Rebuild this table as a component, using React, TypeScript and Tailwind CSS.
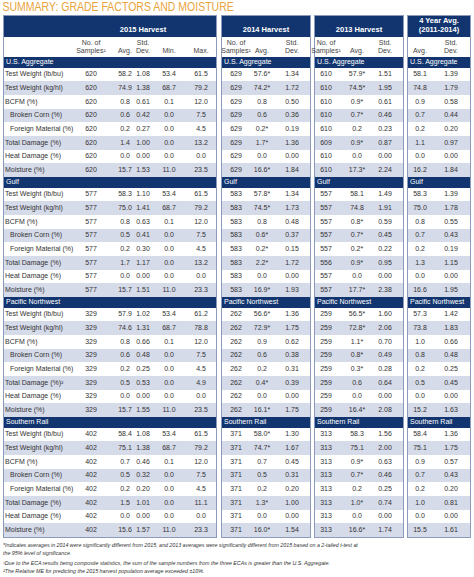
const LABELS: [string, boolean][] = [
  ["Test Weight (lb/bu)", false],
  ["Test Weight (kg/hl)", false],
  ["BCFM (%)", false],
  ["Broken Corn (%)", true],
  ["Foreign Material (%)", true],
  ["Total Damage (%)", false],
  ["Heat Damage (%)", false],
  ["Moisture (%)", false],
];

// each row: 2015 | 2014 | 2013 | 4 year avg
const SECTIONS = [
  {
    name: "U.S. Aggregate",
    rows: [
      "620 58.2 1.08 53.4 61.5|629 57.6* 1.34|610 57.9* 1.51|58.1 1.39",
      "620 74.9 1.38 68.7 79.2|629 74.2* 1.72|610 74.5* 1.95|74.8 1.79",
      "620 0.8 0.61 0.1 12.0|629 0.8 0.50|610 0.9* 0.61|0.9 0.58",
      "620 0.6 0.42 0.0 7.5|629 0.6 0.36|610 0.7* 0.46|0.7 0.44",
      "620 0.2 0.27 0.0 4.5|629 0.2* 0.19|610 0.2 0.23|0.2 0.20",
      "620 1.4 1.00 0.0 13.2|629 1.7* 1.36|609 0.9* 0.87|1.1 0.97",
      "620 0.0 0.00 0.0 0.0|629 0.0 0.00|610 0.0 0.00|0.0 0.00",
      "620 15.7 1.53 11.0 23.5|629 16.6* 1.84|610 17.3* 2.24|16.2 1.84",
    ],
  },
  {
    name: "Gulf",
    rows: [
      "577 58.3 1.10 53.4 61.5|583 57.8* 1.34|557 58.1 1.49|58.3 1.39",
      "577 75.0 1.41 68.7 79.2|583 74.5* 1.73|557 74.8 1.91|75.0 1.78",
      "577 0.8 0.63 0.1 12.0|583 0.8 0.48|557 0.8* 0.59|0.8 0.55",
      "577 0.5 0.41 0.0 7.5|583 0.6* 0.37|557 0.7* 0.45|0.7 0.43",
      "577 0.2 0.30 0.0 4.5|583 0.2* 0.15|557 0.2* 0.22|0.2 0.19",
      "577 1.7 1.17 0.0 13.2|583 2.2* 1.72|556 0.9* 0.95|1.3 1.15",
      "577 0.0 0.00 0.0 0.0|583 0.0 0.00|557 0.0 0.00|0.0 0.00",
      "577 15.7 1.51 11.0 23.3|583 16.9* 1.93|557 17.7* 2.38|16.6 1.95",
    ],
  },
  {
    name: "Pacific Northwest",
    td: "Total Damage (%)²",
    rows: [
      "329 57.9 1.02 53.4 61.2|262 56.6* 1.36|259 56.5* 1.60|57.3 1.42",
      "329 74.6 1.31 68.7 78.8|262 72.9* 1.75|259 72.8* 2.06|73.8 1.83",
      "329 0.8 0.66 0.1 12.0|262 0.9 0.62|259 1.1* 0.70|1.0 0.66",
      "329 0.6 0.48 0.0 7.5|262 0.6 0.38|259 0.8* 0.49|0.8 0.48",
      "329 0.2 0.25 0.0 4.5|262 0.2 0.31|259 0.3* 0.28|0.2 0.25",
      "329 0.5 0.53 0.0 4.9|262 0.4* 0.39|259 0.6 0.64|0.5 0.45",
      "329 0.0 0.00 0.0 0.0|262 0.0 0.00|259 0.0 0.00|0.0 0.00",
      "329 15.7 1.55 11.0 23.5|262 16.1* 1.75|259 16.4* 2.08|15.2 1.63",
    ],
  },
  {
    name: "Southern Rail",
    rows: [
      "402 58.4 1.08 53.4 61.5|371 58.0* 1.30|313 58.3 1.56|58.4 1.36",
      "402 75.1 1.38 68.7 79.2|371 74.7* 1.67|313 75.1 2.00|75.1 1.75",
      "402 0.7 0.46 0.1 12.0|371 0.7 0.45|313 0.9* 0.63|0.9 0.57",
      "402 0.5 0.32 0.0 7.5|371 0.5 0.31|313 0.7* 0.46|0.7 0.43",
      "402 0.2 0.20 0.0 4.5|371 0.2 0.20|313 0.2 0.25|0.2 0.20",
      "402 1.5 1.01 0.0 11.1|371 1.3* 1.00|313 1.0* 0.74|1.0 0.81",
      "402 0.0 0.00 0.0 0.0|371 0.0 0.00|313 0.0 0.00|0.0 0.00",
      "402 15.6 1.57 11.0 23.3|371 16.0* 1.54|313 16.6* 1.74|15.5 1.61",
    ],
  },
];

type PanelProps = {
  idx: number;
  width: string;
  grid: string;
  title: React.ReactNode;
  titlePad?: string;
  heads: string[];
  withLabel?: boolean;
};

function Cell({ children }: { children?: React.ReactNode }) {
  return <div className="flex justify-center whitespace-nowrap">{children}</div>;
}

function Panel({ idx, width, grid, title, titlePad = "", heads, withLabel }: PanelProps) {
  return (
    <div className={`${width} border border-[#8e9abb] bg-white`}>
      <div className={`h-[21px] bg-[#12356f] flex flex-col items-center justify-end pb-[3px] text-white font-bold text-[7.5px] leading-[9px] ${titlePad}`}>
        {title}
      </div>
      <div className={`h-[20px] grid ${grid} items-end pb-[2px] text-[7px] leading-[8px] text-[#444]`}>
        {withLabel && <div />}
        {heads.map((h, i) => (
          <div key={i} className="flex flex-col items-center whitespace-nowrap">
            {h.split("\n").map((l) => (
              <span key={l}>{l}</span>
            ))}
          </div>
        ))}
      </div>

      {SECTIONS.map((s) => (
        <div key={s.name}>
          <div className="h-[10.5px] bg-[#12356f] text-white text-[7px] leading-[10.5px] pl-[2px] whitespace-nowrap overflow-hidden">
            {s.name}
          </div>
          {s.rows.map((r, ri) => {
            const vals = r.split("|")[idx].split(" ");
            const [label, indent] = LABELS[ri];
            return (
              <div
                key={ri}
                className={`h-[13.7px] grid ${grid} items-center text-[7px] leading-[8px] text-[#333] ${
                  ri % 2 === 1 ? "bg-[#d6dbea]" : "bg-white"
                }`}
              >
                {withLabel && (
                  <div className={`whitespace-nowrap ${indent ? "pl-[6px]" : "pl-[1px]"}`}>
                    {ri === 5 && s.td ? s.td : label}
                  </div>
                )}
                {vals.map((v, vi) => (
                  <Cell key={vi}>{v}</Cell>
                ))}
              </div>
            );
          })}
        </div>
      ))}
    </div>
  );
}

export default function App() {
  return (
    <div className="w-[474px] h-[577px] bg-white overflow-hidden font-['Liberation_Sans',Arial,sans-serif] text-[#333]">
      <div className="h-[15px] pl-[3px] text-[12.5px] leading-[15px] text-[#e9a33b] origin-left scale-x-[0.84] whitespace-nowrap">
        SUMMARY: GRADE FACTORS AND MOISTURE
      </div>

      <div className="flex pl-[3px]">
        <Panel
          idx={0}
          width="w-[214px]"
          grid="grid-cols-[62px_50px_18px_18px_34px_30px]"
          title="2015 Harvest"
          titlePad="pl-[66px]"
          heads={["No. of\nSamples¹", "Avg.", "Std.\nDev.", "Min.", "Max."]}
          withLabel
        />
        <div className="w-[4px]" />
        <Panel
          idx={1}
          width="w-[90px]"
          grid="grid-cols-[28px_24px_36px]"
          title="2014 Harvest"
          heads={["No. of\nSamples¹", "Avg.", "Std.\nDev."]}
        />
        <div className="w-[3px]" />
        <Panel
          idx={2}
          width="w-[90px]"
          grid="grid-cols-[22px_40px_16px]"
          title="2013 Harvest"
          heads={["No. of\nSamples¹", "Avg.", "Std.\nDev."]}
        />
        <div className="w-[3px]" />
        <Panel
          idx={3}
          width="w-[64px]"
          grid="grid-cols-[24px_38px]"
          title={
            <>
              <span>4 Year Avg.</span>
              <span>(2011-2014)</span>
            </>
          }
          heads={["Avg.", "Std.\nDev."]}
        />
      </div>

      {/* Footnotes */}
      <div className="pt-[3px] pl-[3px] italic text-[5.3px] leading-[8px] text-[#333] whitespace-nowrap">
        <p className="mb-[1.5px]">
          *Indicates averages in 2014 were significantly different from 2015, and 2013 averages were significantly
          different from 2015 based on a 2-tailed t-test at
          <br />
          the 95% level of significance.
        </p>
        <p>
          ¹Due to the ECA results being composite statistics, the sum of the sample numbers from the three ECAs is
          greater than the U.S. Aggregate.
        </p>
        <p>²The Relative ME for predicting the 2015 harvest population average exceeded ±10%.</p>
      </div>
    </div>
  );
}
